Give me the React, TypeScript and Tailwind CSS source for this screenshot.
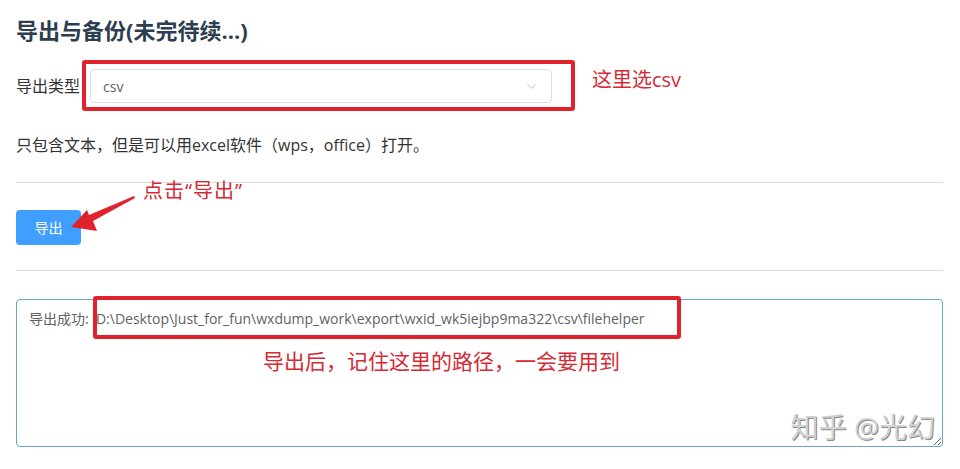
import { ChevronDown } from "lucide-react";

const FONT = "font-['Segoe_UI','Open_Sans','Noto_Sans_CJK_SC',sans-serif]";

function RedBox({ className }: { className: string }) {
  return <div className={`pointer-events-none absolute rounded-[3px] border-[4px] border-[#e0222d] ${className}`} />;
}

function Arrow() {
  return (
    <svg className="pointer-events-none absolute left-0 top-0" width="160" height="60" viewBox="0 0 160 60">
      <polygon points="71,45 87,28 89,33 134,14 135,16 93,39 97,49" fill="#e0222d" />
    </svg>
  );
}

export default function App() {
  const path = "导出成功:  D:\\Desktop\\Just_for_fun\\wxdump_work\\export\\wxid_wk5iejbp9ma322\\csv\\filehelper";

  return (
    <div className={`relative h-[469px] w-[960px] overflow-hidden bg-white pl-4 pr-[17px] ${FONT}`}>
      <h2 className="pt-[16px] text-[22px] font-bold leading-[28px] text-[#2c3e50]">导出与备份(未完待续...)</h2>

      <div className="mt-[21px] flex items-center">
        <span className="w-[74px] text-[16px] text-[#333]">导出类型</span>
        <div className="relative">
          <div className="flex h-[34px] w-[462px] items-center justify-between rounded-[4px] border border-[#dcdfe6] px-[12px]">
            <span className="text-[14px] text-[#606266]">csv</span>
            <ChevronDown size={15} strokeWidth={1.5} className="text-[#b8bcc4]" />
          </div>
          <RedBox className="-left-[8px] -right-[23px] -top-[9px] -bottom-[8px]" />
        </div>
        <span className="mb-[12px] ml-[40px] text-[20px] text-[#d42a34]">这里选csv</span>
      </div>

      <p className="mt-[26px] text-[16px] leading-[24px] text-[#333]">只包含文本，但是可以用excel软件（wps，office）打开。</p>

      <div className="relative">
        <hr className="mt-[25px] border-t border-[#dcdcdc]" />
        <div className="pt-[27px] pb-[25px]">
          <button className="h-[35px] w-[65px] rounded-[4px] bg-[#409eff] text-[14px] text-white">导出</button>
        </div>
        <hr className="border-t border-[#dcdcdc]" />
        <span className="absolute left-[127px] top-[-4px] text-[20px] leading-[26px] tracking-[1px] text-[#d42a34]">点击“导出”</span>
        <div className="absolute -left-4 top-0">
          <Arrow />
        </div>
      </div>

      <div className="relative mt-[28px]">
        <textarea
          readOnly
          value={path}
          className="block h-[148px] w-full rounded-[4px] border border-[#6aa6c8] px-[12px] py-[8px] text-[14px] leading-[21px] text-[#606266] outline-none"
        />
        <RedBox className="left-[77px] top-[-3px] h-[43px] w-[588px]" />
        <span className="pointer-events-none absolute left-[247px] top-[48px] text-[21px] leading-[28px] text-[#d42a34]">
          导出后，记住这里的路径，一会要用到
        </span>
        <span className="pointer-events-none absolute right-[8px] top-[110px] text-[28px] leading-[36px] text-[#d2d2d2] [text-shadow:1px_1px_0_#8a8a8a]">
          知乎 @光幻
        </span>
      </div>
    </div>
  );
}
